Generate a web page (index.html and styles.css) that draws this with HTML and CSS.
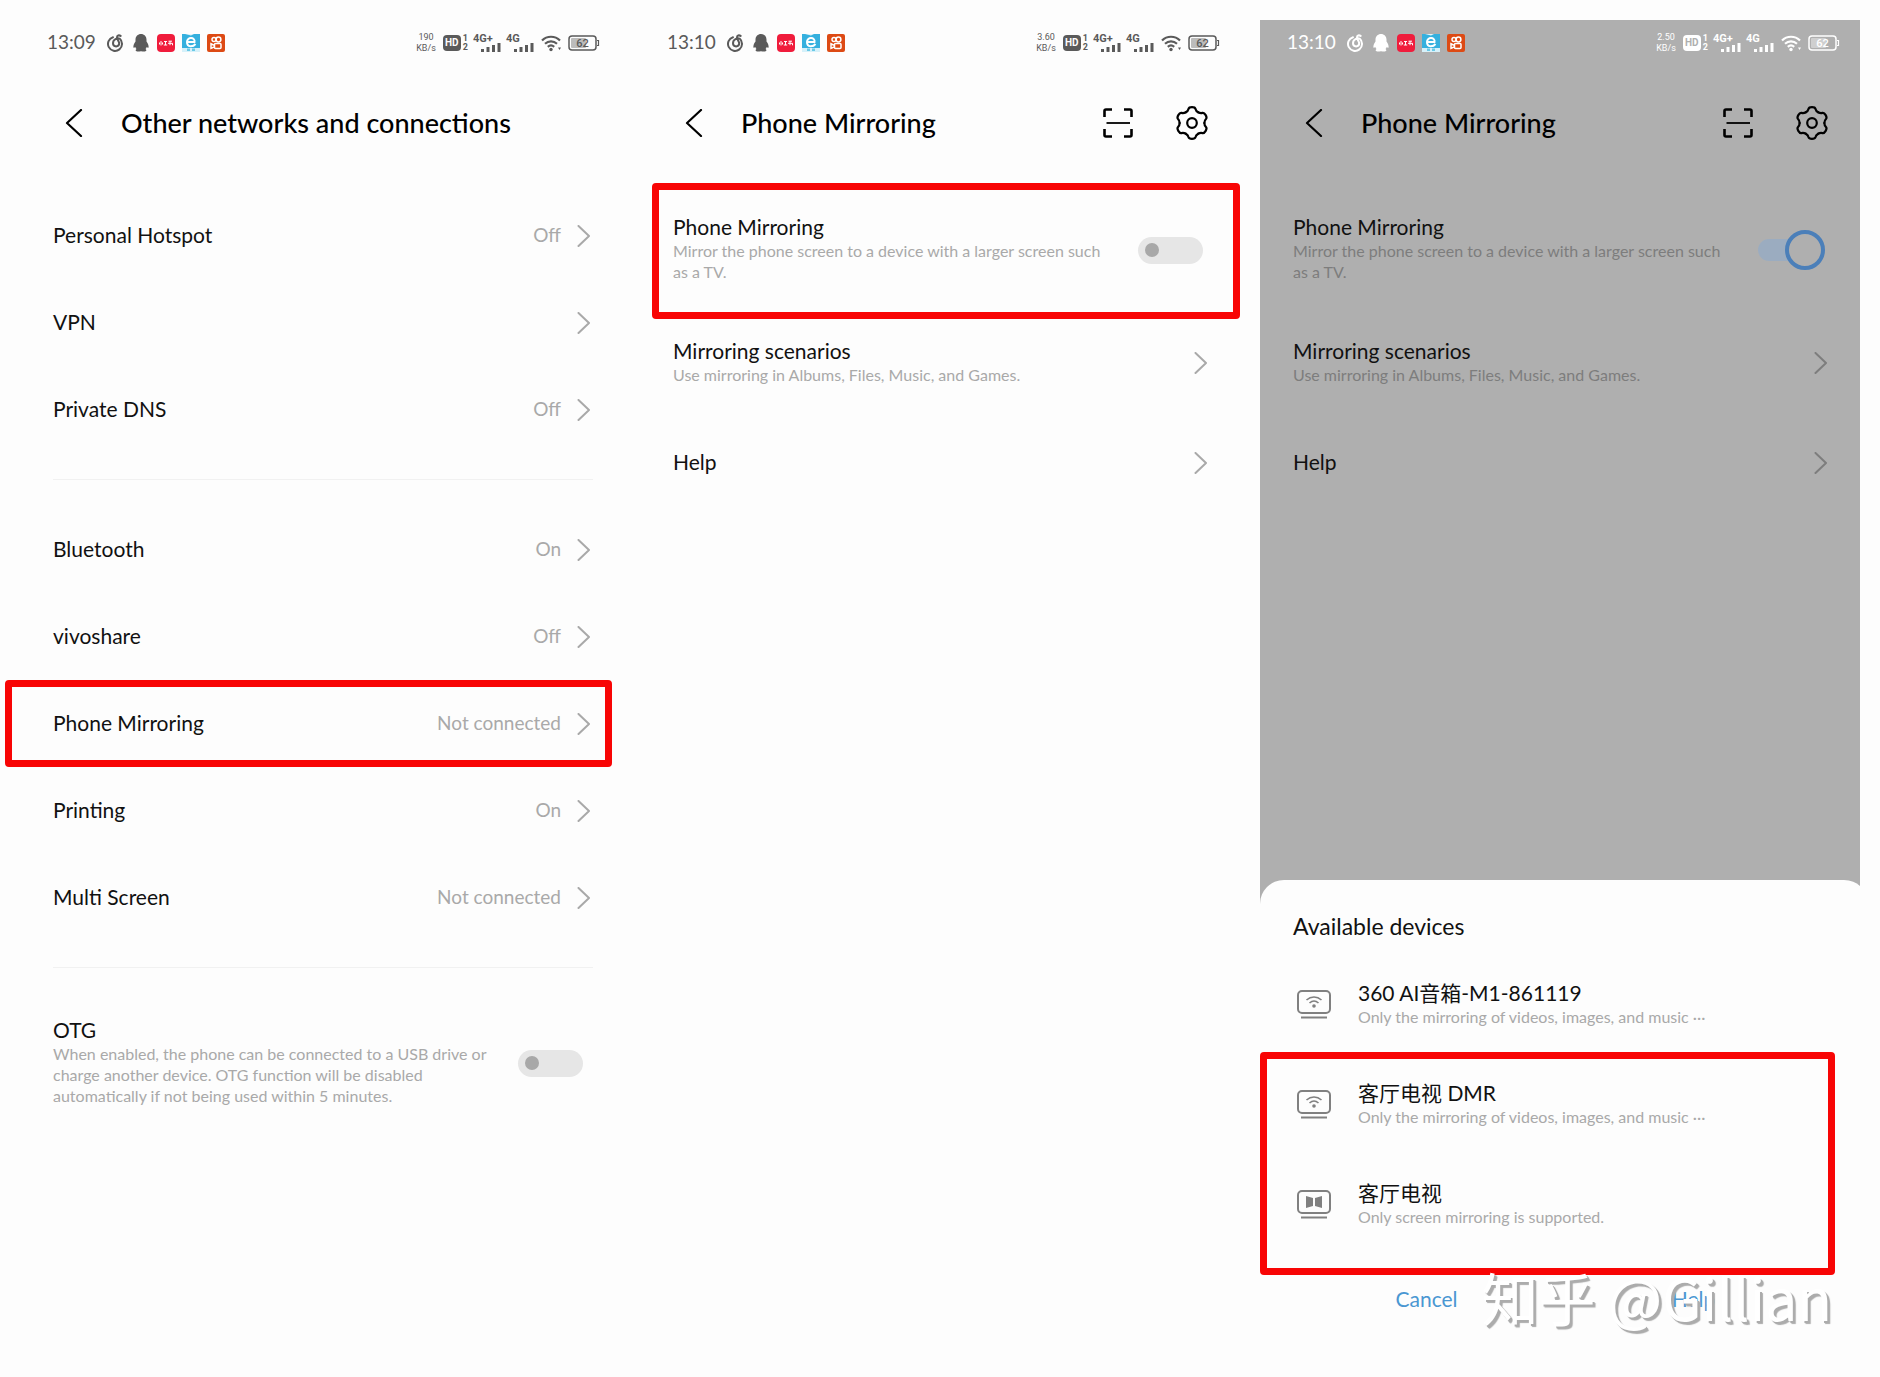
FILE: index.html
```html
<!DOCTYPE html>
<html lang="en">
<head>
<meta charset="utf-8">
<meta name="viewport" content="width=device-width, initial-scale=1">
<title>Phone Mirroring</title>
<link rel="stylesheet" href="styles.css">
</head>
<body>
<svg class="sprite" aria-hidden="true">
  <symbol id="i-music" viewBox="0 0 18 18"><path d="M6 3.2A7 7 0 1 0 12.6 4.6C10.4 3.8 6 5 6 9.3a3.1 3.1 0 0 0 6.2 0C12.2 7.600 10 5.500 10 3.200 10 1.400 12 .9 13.600 1.900" fill="none" stroke="currentColor" stroke-width="2" stroke-linecap="round"/></symbol>
  <symbol id="i-penguin" viewBox="0 0 18 18"><path d="M9 0C5.800 0 3.500 2.400 3.500 5.600v1.800C2 9.200 1.200 11.400 1.400 13.200c.2 1 1.200.5 1.900-.3.2.9.7 1.500 1.200 2.200-1.300.7-1.200 2.300.6 2.500 1.300.1 2.700-.2 3.900-.4 1.200.2 2.600.5 3.900.4 1.800-.2 1.900-1.800.6-2.500.5-.7 1-1.300 1.200-2.200.7.8 1.700 1.300 1.900.3.200-1.800-.6-4-2.100-5.800V5.600C14.500 2.400 12.200 0 9 0z" fill="currentColor"/></symbol>
  <symbol id="i-red" viewBox="0 0 18 18"><rect width="18" height="18" rx="4" fill="#f01c3c"/><path d="M4 7v4.500M2.500 8.500v2M5.500 8.500v2M7 7.500h3M8.500 7.500v3.500M6.800 11h3.400M11.500 7.200h3.500M13 7.200v4M11 9.300h4.500M15.500 9.300v2" fill="none" stroke="#fff" stroke-width="1"/></symbol>
  <symbol id="i-blue" viewBox="0 0 18 18"><path d="M0 0h18v14H0z" fill="#35b0de"/><path d="M0 14h18v4H0z" fill="#d6f1fa"/><path d="M5 14.500h3v2.500H5zM10 14.500h3v2.500h-3z" fill="#6cc9e6"/><path d="M3 0h9L9 1.500z" fill="#dff5fc"/><path d="M6 8h6.500C13.500 3 5 2.500 5 8s6 5 8.500 2" fill="none" stroke="#fff" stroke-width="2"/></symbol>
  <symbol id="i-orange" viewBox="0 0 18 18"><rect width="18" height="18" rx="2" fill="#dd4a14"/><g fill="none" stroke="#fff" stroke-width="1.500"><circle cx="7" cy="5.500" r="2"/><circle cx="11.500" cy="5.500" r="2.400"/><rect x="7.500" y="9.500" width="6.500" height="5" rx="1"/><path d="M7 11.200 4 9.800v4.600l3-1.400"/></g></symbol>
  <symbol id="i-bars" viewBox="0 0 20 9"><path d="M0 6h3v3H0zM5.500 4h3v5h-3zM11 2h3v7h-3zM16.500 0h3v9h-3z" fill="currentColor"/></symbol>
  <symbol id="i-wifi" viewBox="0 0 22 18"><g fill="none" stroke="currentColor" stroke-width="2.200"><path d="M1 6.500C6 1.500 14 1.500 19 6.500"/><path d="M4 9.800c3.500-3.200 8.500-3.200 12 0"/><path d="M6.800 12.800c2-1.700 4.400-1.700 6.400 0"/></g><circle cx="10" cy="15.500" r="1.700" fill="currentColor"/><path d="M17 13.500h3L18.500 16z" fill="currentColor"/></symbol>
  <symbol id="i-battery" viewBox="0 0 32 18"><rect x="1" y="2" width="27" height="14" rx="3" fill="none" stroke="currentColor" stroke-width="1.500"/><rect x="3" y="4" width="15" height="10" rx="1" fill="currentColor" opacity=".4"/><path d="M29 6.500h1.500v5H29" fill="none" stroke="currentColor" stroke-width="1.200"/></symbol>
  <symbol id="i-back" viewBox="0 0 18 28"><path d="M16 1 2 14l14 13" fill="none" stroke="currentColor" stroke-width="2.200" stroke-linecap="round" stroke-linejoin="round"/></symbol>
  <symbol id="i-next" viewBox="0 0 14 22"><path d="M1.500 1 12 11 1.500 21" fill="none" stroke="currentColor" stroke-width="2" stroke-linecap="round" stroke-linejoin="round"/></symbol>
  <symbol id="i-scan" viewBox="0 0 30 30"><path d="M1.500 9V3q0-1.500 1.500-1.500h6M21 1.500h6q1.500 0 1.500 1.500v6M28.500 21v6q0 1.500-1.500 1.500h-6M9 28.500H3q-1.500 0-1.500-1.500v-6" fill="none" stroke="currentColor" stroke-width="2.600"/><path d="M3.500 15h23.500" stroke="currentColor" stroke-width="1.800"/></symbol>
  <symbol id="i-gear" viewBox="-17 -17 34 34">
    <g fill="none" stroke="currentColor" stroke-width="2.200" stroke-linecap="round">
      <path id="tooth" d="M-6.200-10.700Q-4-12-3.500-14.100-3-15.800 0-15.800 3-15.800 3.500-14.100 4-12 6.200-10.700"/>
      <use href="#tooth" transform="rotate(60)"/><use href="#tooth" transform="rotate(120)"/><use href="#tooth" transform="rotate(180)"/><use href="#tooth" transform="rotate(240)"/><use href="#tooth" transform="rotate(300)"/>
      <circle r="4.800"/>
    </g>
  </symbol>
  <symbol id="i-cast" viewBox="0 0 34 30"><g fill="none" stroke="currentColor" stroke-width="2"><rect x="1" y="1" width="32" height="22" rx="4"/><path d="M4 27.500h26"/><path d="M9.500 10c4.500-4 10.500-4 15 0M12.500 13c2.800-2.500 6.200-2.500 9 0" stroke-width="1.600"/></g><circle cx="17" cy="16" r="1.800" fill="currentColor"/></symbol>
  <symbol id="i-mirror" viewBox="0 0 34 30"><g fill="none" stroke="currentColor" stroke-width="2"><rect x="1" y="1" width="32" height="22" rx="4"/><path d="M4 27.500h26"/></g><path d="M9 6 16 8v8l-7 2zM25 6 18 8v8l7 2z" fill="currentColor"/></symbol>
</svg>

<main class="screens">
  <section class="phone">
    <div class="status">
      <span class="time">13:09</span>
      <div class="apps"><svg><use href="#i-music"/></svg><svg><use href="#i-penguin"/></svg><svg><use href="#i-red"/></svg><svg><use href="#i-blue"/></svg><svg><use href="#i-orange"/></svg></div>
      <div class="signals">
        <span class="speed">190<br>KB/s</span>
        <span class="hd"><b class="hd-box">HD</b><span class="sims">1<br>2</span></span>
        <span class="net"><b>4G+</b><svg><use href="#i-bars"/></svg></span>
        <span class="net"><b>4G</b><svg><use href="#i-bars"/></svg></span>
        <svg class="wifi"><use href="#i-wifi"/></svg>
        <span class="battery"><svg><use href="#i-battery"/></svg><b>62</b></span>
      </div>
    </div>
    <header class="bar">
      <button class="icon-btn back" aria-label="Back"><svg><use href="#i-back"/></svg></button>
      <h1 class="title">Other networks and connections</h1>
    </header>
    <nav class="list list--settings">
      <a class="row" href="#"><span class="label">Personal Hotspot</span><span class="value">Off</span><svg class="next"><use href="#i-next"/></svg></a>
      <a class="row" href="#"><span class="label">VPN</span><svg class="next"><use href="#i-next"/></svg></a>
      <a class="row" href="#"><span class="label">Private DNS</span><span class="value">Off</span><svg class="next"><use href="#i-next"/></svg></a>
      <hr class="divider">
      <a class="row" href="#"><span class="label">Bluetooth</span><span class="value">On</span><svg class="next"><use href="#i-next"/></svg></a>
      <a class="row" href="#"><span class="label">vivoshare</span><span class="value">Off</span><svg class="next"><use href="#i-next"/></svg></a>
      <a class="row marked marked--row" href="#"><span class="label">Phone Mirroring</span><span class="value">Not connected</span><svg class="next"><use href="#i-next"/></svg></a>
      <a class="row" href="#"><span class="label">Printing</span><span class="value">On</span><svg class="next"><use href="#i-next"/></svg></a>
      <a class="row" href="#"><span class="label">Multi Screen</span><span class="value">Not connected</span><svg class="next"><use href="#i-next"/></svg></a>
      <hr class="divider">
    </nav>
    <div class="option option--otg">
      <label class="copy" for="otg"><span class="label">OTG</span><span class="note">When enabled, the phone can be connected to a USB drive or charge another device. OTG function will be disabled automatically if not being used within 5 minutes.</span></label>
      <input class="switch" type="checkbox" id="otg">
    </div>
  </section>

  <section class="phone">
    <div class="status">
      <span class="time">13:10</span>
      <div class="apps"><svg><use href="#i-music"/></svg><svg><use href="#i-penguin"/></svg><svg><use href="#i-red"/></svg><svg><use href="#i-blue"/></svg><svg><use href="#i-orange"/></svg></div>
      <div class="signals">
        <span class="speed">3.60<br>KB/s</span>
        <span class="hd"><b class="hd-box">HD</b><span class="sims">1<br>2</span></span>
        <span class="net"><b>4G+</b><svg><use href="#i-bars"/></svg></span>
        <span class="net"><b>4G</b><svg><use href="#i-bars"/></svg></span>
        <svg class="wifi"><use href="#i-wifi"/></svg>
        <span class="battery"><svg><use href="#i-battery"/></svg><b>62</b></span>
      </div>
    </div>
    <header class="bar">
      <button class="icon-btn back" aria-label="Back"><svg><use href="#i-back"/></svg></button>
      <h1 class="title">Phone Mirroring</h1>
      <button class="icon-btn scan" aria-label="Scan"><svg><use href="#i-scan"/></svg></button>
      <button class="icon-btn gear" aria-label="Settings"><svg><use href="#i-gear"/></svg></button>
    </header>
    <div class="option option--mirror marked marked--option">
      <label class="copy" for="mirror-a"><span class="label">Phone Mirroring</span><span class="note">Mirror the phone screen to a device with a larger screen such as a TV.</span></label>
      <input class="switch" type="checkbox" id="mirror-a">
    </div>
    <nav class="list">
      <a class="row row--tall" href="#"><span class="copy"><span class="label">Mirroring scenarios</span><span class="note">Use mirroring in Albums, Files, Music, and Games.</span></span><svg class="next"><use href="#i-next"/></svg></a>
      <a class="row row--tall" href="#"><span class="label">Help</span><svg class="next"><use href="#i-next"/></svg></a>
    </nav>
  </section>

  <section class="phone phone--dim">
    <div class="status">
      <span class="time">13:10</span>
      <div class="apps"><svg><use href="#i-music"/></svg><svg><use href="#i-penguin"/></svg><svg><use href="#i-red"/></svg><svg><use href="#i-blue"/></svg><svg><use href="#i-orange"/></svg></div>
      <div class="signals">
        <span class="speed">2.50<br>KB/s</span>
        <span class="hd"><b class="hd-box">HD</b><span class="sims">1<br>2</span></span>
        <span class="net"><b>4G+</b><svg><use href="#i-bars"/></svg></span>
        <span class="net"><b>4G</b><svg><use href="#i-bars"/></svg></span>
        <svg class="wifi"><use href="#i-wifi"/></svg>
        <span class="battery"><svg><use href="#i-battery"/></svg><b>62</b></span>
      </div>
    </div>
    <header class="bar">
      <button class="icon-btn back" aria-label="Back"><svg><use href="#i-back"/></svg></button>
      <h1 class="title">Phone Mirroring</h1>
      <button class="icon-btn scan" aria-label="Scan"><svg><use href="#i-scan"/></svg></button>
      <button class="icon-btn gear" aria-label="Settings"><svg><use href="#i-gear"/></svg></button>
    </header>
    <div class="option option--mirror">
      <label class="copy" for="mirror-b"><span class="label">Phone Mirroring</span><span class="note">Mirror the phone screen to a device with a larger screen such as a TV.</span></label>
      <input class="switch" type="checkbox" id="mirror-b" checked>
    </div>
    <nav class="list">
      <a class="row row--tall" href="#"><span class="copy"><span class="label">Mirroring scenarios</span><span class="note">Use mirroring in Albums, Files, Music, and Games.</span></span><svg class="next"><use href="#i-next"/></svg></a>
      <a class="row row--tall" href="#"><span class="label">Help</span><svg class="next"><use href="#i-next"/></svg></a>
    </nav>
    <div class="sheet">
      <h2 class="sheet-title">Available devices</h2>
      <a class="device" href="#"><svg class="tv"><use href="#i-cast"/></svg><span class="copy"><span class="label">360 AI音箱-M1-861119</span><span class="note">Only the mirroring of videos, images, and music ···</span></span></a>
      <div class="marked marked--devices">
        <a class="device" href="#"><svg class="tv"><use href="#i-cast"/></svg><span class="copy"><span class="label">客厅电视 DMR</span><span class="note">Only the mirroring of videos, images, and music ···</span></span></a>
        <a class="device" href="#"><svg class="tv"><use href="#i-mirror"/></svg><span class="copy"><span class="label">客厅电视</span><span class="note">Only screen mirroring is supported.</span></span></a>
      </div>
      <div class="actions"><button class="action">Cancel</button><button class="action">Help</button></div>
      <p class="watermark">知乎 @Gillian</p>
    </div>
  </section>
</main>
</body>
</html>
```
FILE: styles.css
```css
*, ::before, ::after { box-sizing: border-box; }

body {
  margin: 0;
  background: #fdfdfd;
  color: #111;
  font-family: Lato, "Noto Sans CJK SC", sans-serif;
  font-size: 21px;
  line-height: 26px;
}

h1, h2, p { margin: 0; }
a { color: inherit; text-decoration: none; }
button { border: 0; padding: 0; background: none; color: inherit; font: inherit; }
svg { display: block; flex: none; }
.sprite { position: absolute; width: 0; height: 0; }

.screens {
  display: grid;
  grid-template-columns: repeat(3, minmax(0, 1fr));
  min-height: 100vh;
  padding-right: 20px;
}

/* --crop: how much of the screenshot's top and left edge is cut away */
.phone {
  --crop: 0px;
  --paper: #fdfdfd;
  --muted: #a9a9a9;
  --status: #5a5a5a;
  display: flex;
  flex-direction: column;
}
.phone--dim {
  --crop: 20px;
  --paper: #afafaf;
  --muted: #7d7d7d;
  --status: #fff;
  margin: 20px 0 0 20px;
  background: #afafaf;
  overflow: hidden;
}

/* status bar */
.status {
  display: flex;
  align-items: center;
  padding: calc(30px - var(--crop)) 20px 30px calc(47px - var(--crop));
  color: var(--status);
}
.time { padding-bottom: 2px; font-size: 19px; line-height: 24px; }
.apps { display: flex; gap: 7px; margin-left: 11px; }
.apps svg { width: 18px; height: 18px; }
.signals {
  display: flex;
  align-items: center;
  gap: 5px;
  margin-left: auto;
  font-family: Roboto, sans-serif;
  line-height: 9px;
}
.speed { margin-right: 2px; font-size: 9px; line-height: 11px; text-align: center; }
.hd { display: flex; align-items: center; gap: 2px; }
.hd-box {
  width: 18px;
  border-radius: 4px;
  background: currentColor;
  font-size: 10px;
  line-height: 16px;
  text-align: center;
}
.hd-box::first-line { color: var(--paper); }
.sims { font-size: 9px; font-weight: 700; }
.net { display: flex; flex-direction: column; width: 28px; font-size: 11px; }
.net svg { width: 20px; height: 9px; align-self: flex-end; }
.wifi { width: 22px; height: 18px; margin-left: 2px; }
.battery { display: grid; align-items: center; font-size: 11px; }
.battery > * { grid-area: 1 / 1; }
.battery svg { width: 32px; height: 18px; }
.battery b { padding-right: 3px; font-weight: 500; text-align: center; }

/* title bar */
.bar {
  display: flex;
  align-items: center;
  height: 74px;
  padding: 0 31px 0 calc(65px - var(--crop));
}
.title { flex: 1; font-size: 27px; line-height: 34px; font-weight: 500; color: #000; }
.icon-btn { color: #000; }
.back { margin-right: 38px; }
.back svg { width: 18px; height: 28px; }
.scan svg { width: 30px; height: 30px; }
.gear { margin-left: 42px; }
.gear svg { width: 34px; height: 34px; }

/* lists */
.list { display: flex; flex-direction: column; }
.list--settings { padding-top: 32px; }
.row {
  display: flex;
  align-items: center;
  gap: 16px;
  min-height: 87px;
  padding: 0 29px 0 calc(53px - var(--crop));
}
.row--tall { min-height: 100px; padding-right: 32px; }
.label { flex: 1; }
.row > .label, .value { padding-bottom: 2px; }
.value { color: var(--muted); font-size: 19px; }
.next { width: 14px; height: 22px; color: var(--muted); }
.divider { width: auto; height: 1px; margin: 26px 27px 26px 53px; border: 0; background: #f1f1f1; }

.copy { display: flex; flex: 1; flex-direction: column; margin: -2px 0 2px; }
.note { color: var(--muted); font-size: 16px; line-height: 21px; }

.option {
  display: flex;
  align-items: center;
  gap: 20px;
  padding: 0 37px 0 calc(53px - var(--crop));
}
.option--otg { padding-top: 25px; }
.option--mirror { margin-top: 23px; padding-top: 33px; padding-bottom: 29px; }
.option--mirror .note { padding-right: 8px; }

/* switches */
.switch {
  position: relative;
  flex: none;
  appearance: none;
  width: 65px;
  height: 27px;
  margin: 0;
  border-radius: 14px;
  background: #e6e6e6;
}
.switch::before {
  content: "";
  position: absolute;
  top: 6px;
  left: 7px;
  width: 14px;
  height: 14px;
  border-radius: 50%;
  background: #a8a8a8;
}
.switch:checked { height: 22px; background: linear-gradient(90deg, #9bacc0 48px, transparent 48px); }
.switch:checked::before {
  top: -9px;
  left: 27px;
  width: 40px;
  height: 40px;
  border: 4px solid #4b7fb9;
  background: #afafaf;
}

/* red annotation frames */
.marked { position: relative; }
.marked::after {
  content: "";
  position: absolute;
  border: 7px solid #f80505;
  border-radius: 4px;
  pointer-events: none;
}
.marked--row::after { inset: 0 8px 0 5px; }
.marked--option::after { inset: 0 0 -6px 32px; }
.marked--devices::after { inset: -3px 33px -20px 0; }

/* device sheet */
.sheet {
  --muted: #a9a9a9;
  position: relative;
  margin: auto -8px 0 0;
  padding: 33px 0 64px;
  border-radius: 24px 24px 0 0;
  background: #fdfdfd;
}
.sheet-title { margin: 0 33px 16px; font-size: 23px; line-height: 26px; font-weight: 400; }
.device { display: flex; align-items: center; gap: 27px; min-height: 100px; padding: 0 41px 0 37px; }
.tv { width: 34px; height: 30px; color: #808080; }
.actions { display: grid; grid-template-columns: 1fr 1fr; margin: 31px 41px 1px 33px; }
.action { color: #4a97d2; }
.watermark {
  position: absolute;
  right: 36px;
  bottom: 43px;
  color: #fff;
  font-family: "Noto Sans CJK SC", sans-serif;
  font-size: 57px;
  line-height: 76px;
  text-shadow: 2px 2px 0 #acacac, 3px 3px 1px #acacac;
  white-space: nowrap;
  pointer-events: none;
}
```
